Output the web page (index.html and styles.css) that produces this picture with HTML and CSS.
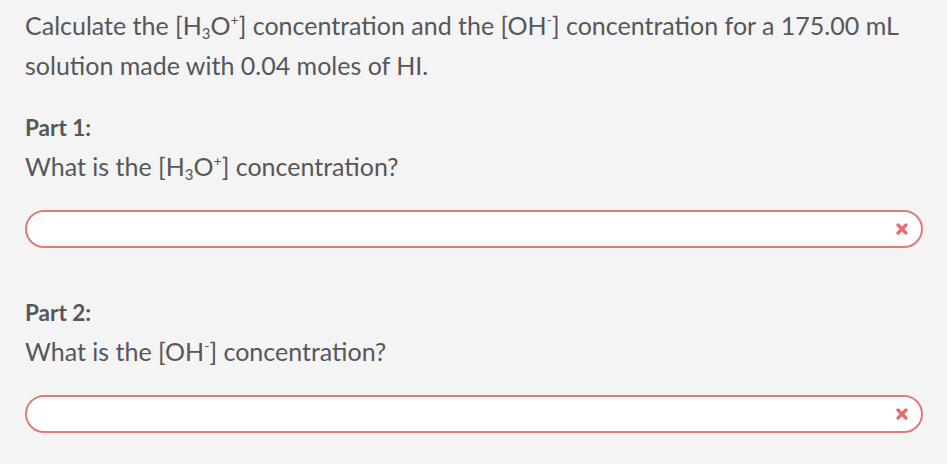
FILE: index.html
```html
<!DOCTYPE html>
<html>
<head>
<meta charset="utf-8">
<link rel="stylesheet" href="styles.css">
</head>
<body>
<main class="page">
  <p class="question">Calculate the [H<sub>3</sub>O<sup>+</sup>] concentration and the [OH<sup>-</sup>] concentration for a 175.00 mL solution made with 0.04 moles of HI.</p>

  <section class="part">
    <h3 class="part-title">Part 1:</h3>
    <p class="part-text">What is the [H<sub>3</sub>O<sup>+</sup>] concentration?</p>
    <div class="answer">
      <input class="answer-input" type="text">
      <svg class="answer-x" width="12" height="12" viewBox="0 0 12 12"><path d="M2 2 L10 10 M10 2 L2 10" stroke="#e96b6b" stroke-width="3.2" stroke-linecap="round"/></svg>
    </div>
  </section>

  <section class="part part-second">
    <h3 class="part-title">Part 2:</h3>
    <p class="part-text">What is the [OH<sup>-</sup>] concentration?</p>
    <div class="answer">
      <input class="answer-input" type="text">
      <svg class="answer-x" width="12" height="12" viewBox="0 0 12 12"><path d="M2 2 L10 10 M10 2 L2 10" stroke="#e96b6b" stroke-width="3.2" stroke-linecap="round"/></svg>
    </div>
  </section>
</main>
</body>
</html>
```

FILE: styles.css
```css
html, body {
  margin: 0;
  padding: 0;
  background: #f4f4f4;
}

.page {
  padding: 5px 25px 0 25px;
  font-family: Lato, "Open Sans", sans-serif;
  color: #555759;
}

.question {
  margin: 0;
  font-size: 25px;
  line-height: 40px;
  width: 880px;
}

sub, sup {
  font-size: 15px;
  line-height: 1;
}

sub {
  vertical-align: -4px;
}

sup {
  vertical-align: 10px;
  font-size: 14px;
}

.part {
  margin-top: 24px;
}

.part-second {
  margin-top: 46px;
}

.part-title {
  margin: 0;
  font-size: 22.5px;
  font-weight: 700;
  line-height: 38px;
}

.part-text {
  margin: 0;
  font-size: 25px;
  line-height: 38px;
}

.answer {
  margin-top: 25px;
  display: flex;
  align-items: center;
  box-sizing: border-box;
  width: 898px;
  height: 38px;
  background: #fff;
  border: 2px solid #e07b7b;
  border-radius: 19px;
  padding: 0 13px 0 16px;
}

.answer-input {
  flex: 1;
  border: none;
  outline: none;
  background: transparent;
  font-size: 18px;
  font-family: inherit;
}

.answer-x {
  display: block;
}
```
